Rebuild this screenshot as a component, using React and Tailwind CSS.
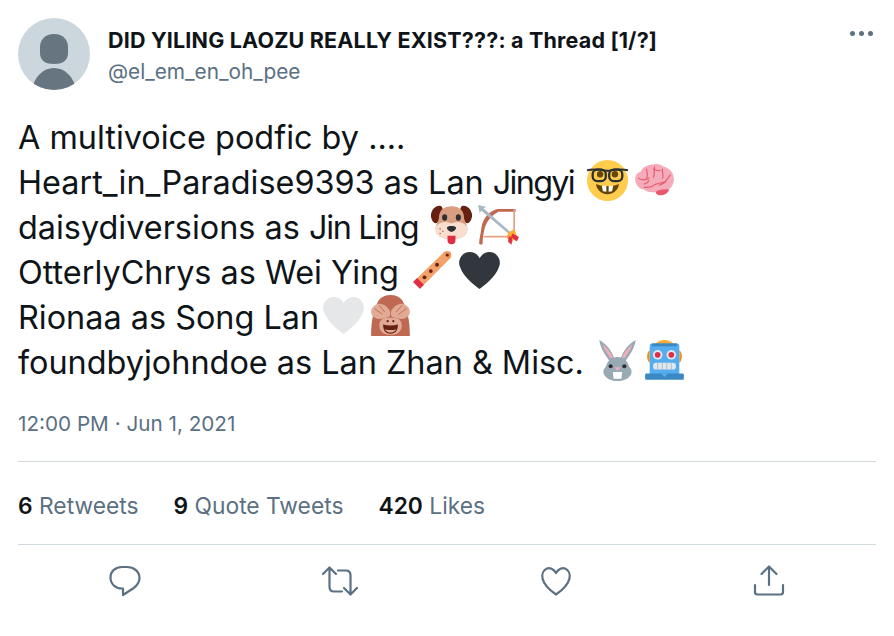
const Emoji = ({ children }) => (
  <svg viewBox="0 0 36 36" className="inline-block w-[41px] h-[41px] -my-[10px] ml-[4px] mr-[2px] align-[3px]">
    {children}
  </svg>
);

const Nerd = () => (
  <>
    <circle cx="18" cy="18" r="18" fill="#FFCC4D" />
    <path d="M8 21c2 1 5 1.800 10 1.800S26 22 28 21c0 4-4 9-10 9S8 25 8 21z" fill="#664500" />
    <path d="M13 22.500l4 .3v5l-3-.4zM19 22.800l4-.3-1 4.900-3 .4z" fill="#fff" />
    <circle cx="11.500" cy="12.500" r="2.800" fill="#664500" />
    <circle cx="24.500" cy="12.500" r="2.800" fill="#664500" />
    <path d="M0 9c3-.8 6-.6 10.500-.6 3 0 5 1 7.500 1s4.500-1 7.500-1C30 8.400 33 8.200 36 9" fill="none" stroke="#292F33" strokeWidth="1.800" />
    <rect x="5" y="8.500" width="11.500" height="10" rx="4" fill="none" stroke="#292F33" strokeWidth="2" />
    <rect x="19.500" y="8.500" width="11.500" height="10" rx="4" fill="none" stroke="#292F33" strokeWidth="2" />
  </>
);

const Brain = () => (
  <>
    <path d="M1 17c0-4 2-6 5-7 2-4 6-6 11-6 3-1 7 0 9 2 5 1 9 5 9 11 0 5-3 9-7 10-3 2-6 2-9 1-4 1-8 0-10-2-4 0-8-4-8-9z" fill="#F4ABBA" />
    <path d="M19 28c2-2 8-3 12-2-1 3-4 5-7 5s-5-1-5-3z" fill="#E8596E" />
    <path d="M4 16c3 2 6 2 9 0m-2-8c0 3 2 5 0 8m7-10c-1 3 1 6-1 9m8-7c-1 3 2 5 0 8m7-3c-2 2-3 5-5 6-4 2-8 1-11 4-2 1-5 1-7 1m19-5c-2 1-3 3-6 3m-5-14c2 1 3 2 6 1M9 21c2 0 3-1 4-3" fill="none" stroke="#EA596E" strokeWidth="1" strokeLinecap="round" />
  </>
);

const Dog = () => (
  <>
    <path d="M9 1C5-.500 1 3 0 8c-.5 4 2 8 4 8 3 0 5-6 6-9 .5-2 .5-5-1-6zM27 1c4-1.500 8 2 9 7 .5 4-2 8-4 8-3 0-5-6-6-9-.5-2-.5-5 1-6z" fill="#662113" />
    <path d="M18 1C11 1 7 5 7 11c0 3-3 6-3 10 0 6 6 9 14 9s14-3 14-9c0-4-3-7-3-10 0-6-4-10-11-10z" fill="#D99E82" />
    <path d="M4 21c0-4 5-6 9-6 2 0 3 1 5 1s3-1 5-1c4 0 9 2 9 6 0 6-6 9-14 9S4 27 4 21z" fill="#F7DECE" />
    <ellipse cx="12" cy="11" rx="2.200" ry="2.800" fill="#292F33" />
    <ellipse cx="24" cy="11" rx="2.200" ry="2.800" fill="#292F33" />
    <path d="M14 20c0-2 8-2 8 0s-2.500 3.500-4 3.500-4-1.500-4-3.500z" fill="#292F33" />
    <path d="M14.500 27h7v4a3.500 3.500 0 0 1-7 0z" fill="#DD2E44" />
    <circle cx="8" cy="21" r=".7" fill="#C1694F" /><circle cx="10.500" cy="23" r=".7" fill="#C1694F" /><circle cx="8" cy="25" r=".7" fill="#C1694F" />
  </>
);

const Bow = () => (
  <>
    <path d="M33 3.500H17C10 5 4 12 3 20c-.5 5-2 10-2 14 1 1 3 1 3 0 0-5 1-10 2-14 2-6 6-11 12-14h15z" fill="#C1694F" />
    <path d="M5 27h26V4h1.500v24.500H5z" fill="#E6A183" />
    <path d="M0 0l7 1.500-2 1.500 26 23-1.500 1.500L3 5 1.500 7z" fill="#AAB8C2" />
    <path d="M27 24l5-3 2 6-5 7-4-6z" fill="#FFAC33" />
    <path d="M30 25l6 3-2 4-5-4zM27 27l3 2-.5 6-3-2.500z" fill="#DD2E44" />
  </>
);

const Flute = () => (
  <>
    <path d="M1 28L28 2c2-1.500 5-1.500 6 .5s.5 4-1 5.500L7 34z" fill="#F4A26B" />
    <path d="M1 28l3.500-3.500 6 6L7 34z" fill="#DD2E44" />
    <path d="M28 2l6 .5-1 5.500-3-2z" fill="#EE8E4F" />
    <circle cx="31" cy="4.500" r="1.300" fill="#662113" />
    <circle cx="22" cy="13" r="1.700" fill="#662113" />
    <circle cx="16.500" cy="18.500" r="1.700" fill="#662113" />
    <circle cx="11" cy="24" r="1.700" fill="#662113" />
  </>
);

const Heart = ({ fill }) => (
  <path d="M35.900 11.200c0-5.200-4.100-9.400-9.200-9.400-3.700 0-7 2.300-8.500 5.500-1.500-3.200-4.900-5.500-8.700-5.500C4.200 1.800.1 6 .1 11.200c0 1.300.3 2.600.8 3.800C3.800 24 14 31.500 18 34.200c4-2.700 14.200-10.200 17.100-19.200.5-1.200.8-2.500.8-3.800z" fill={fill} />
);

const Monkey = () => (
  <>
    <path d="M18 0C10 0 6 5 5 12c-3 5-4 14-4 24h34c0-10-1-19-4-24-1-7-5-12-13-12z" fill="#BF6952" />
    <path d="M9 23c2-3 5-3 9-3s7 0 9 3c2 4 1 12-9 12S7 27 9 23z" fill="#E0AA94" />
    <path d="M11.500 26c4 1 9 1 13 0 0 5-2 8-6.500 8s-6.500-3-6.500-8z" fill="#662113" />
    <path d="M13 30c3 1 7 1 10 0-1 2-3 3-5 3s-4-1-5-3z" fill="#E0AA94" />
    <circle cx="15.500" cy="23" r="1" fill="#662113" /><circle cx="20.500" cy="23" r="1" fill="#662113" />
    <path d="M1 15c0-4 3-6 6-7 3-1 7 1 10 5 1 2 1 5 0 6-3 1-6 2-9 2-4 0-7-3-7-6zM35 15c0-4-3-6-6-7-3-1-7 1-10 5-1 2-1 5 0 6 3 1 6 2 9 2 4 0 7-3 7-6z" fill="#E0AA94" />
    <path d="M8 9l5 6M4 12l7 5M23 15l5-6M25 17l7-5" stroke="#BF6952" strokeWidth=".8" fill="none" />
  </>
);

const Rabbit = () => (
  <>
    <path d="M12 20C8 14 3 8 2 0c6 3 12 10 14 19zM24 20c4-6 9-12 10-20-6 3-12 10-14 19z" fill="#99AAB5" />
    <path d="M12 16C9 12 6 8 5 4c4 3 8 8 9 12zM24 16c3-4 6-8 7-12-4 3-8 8-9 12z" fill="#F4ABBA" />
    <path d="M18 15c-6 0-9 4-10 8-2 2-3 4-2 7 2 4 7 6 12 6s10-2 12-6c1-3 0-5-2-7-1-4-4-8-10-8z" fill="#99AAB5" />
    <circle cx="12" cy="23" r="1.800" fill="#292F33" /><circle cx="24" cy="23" r="1.800" fill="#292F33" />
    <path d="M15 24h6l-3 3z" fill="#F4ABBA" />
    <path d="M14 28c2.500 0 5.500 0 8 0l-.5 6h-7z" fill="#fff" />
  </>
);

const Robot = () => (
  <>
    <path d="M9 5c1-3 5-5 9-5s8 2 9 5z" fill="#FFAC33" />
    <path d="M5 9c-3 2-3 9 0 11zM31 9c3 2 3 9 0 11z" fill="#F4900C" />
    <rect x="5" y="3" width="26" height="28" rx="2" fill="#55ACEE" />
    <rect x="7" y="3" width="22" height="2.500" fill="#3B88C3" />
    <circle cx="12" cy="13" r="4.200" fill="#E1E8ED" /><circle cx="24" cy="13" r="4.200" fill="#E1E8ED" />
    <circle cx="12" cy="13" r="2.500" fill="#DD2E44" /><circle cx="24" cy="13" r="2.500" fill="#DD2E44" />
    <rect x="8" y="20" width="20" height="6" rx="2.500" fill="#E1E8ED" />
    <path d="M12 20v6M16 20v6M20 20v6M24 20v6" stroke="#99AAB5" strokeWidth=".6" />
    <rect x="1" y="29.500" width="34" height="5.500" rx="1" fill="#3B88C3" />
    <path d="M15 29.500h6l-3 3z" fill="#55ACEE" />
  </>
);

const lines = [
  ["A multivoice podfic by ...."],
  [<>Heart_in_Paradise9393 as Lan <span className="tracking-[-1.700px]">Jingyi</span> </>, <Nerd />, <Brain />],
  [<>daisydiversions as <span className="tracking-[-1.300px]">Jin Ling</span> </>, <Dog />, <Bow />],
  ["OtterlyChrys as Wei Ying ", <Flute />, <Heart fill="#31373D" />],
  ["Rionaa as Song Lan", <Heart fill="#E6E7E8" />, <Monkey />],
  ["foundbyjohndoe as Lan Zhan & Misc. ", <Rabbit />, <Robot />],
];

const Stat = ({ value, label }) => (
  <span className="text-[#5b7083]">
    <span className="font-semibold text-[#0f1419]">{value}</span> {label}
  </span>
);

export default function App() {
  return (
    <div className="w-[894px] h-[636px] bg-white px-[18px] pt-[18px] text-[#0f1419] font-['Inter',sans-serif] overflow-hidden">
      {/* Header */}
      <div className="flex items-start">
        <svg viewBox="0 0 72 72" className="w-[72px] h-[72px] shrink-0 rounded-full">
          <rect width="72" height="72" fill="#ccd6dd" />
          <path d="M36 16c9 0 14 6 14 13 0 2 0 4 0 6 0 8-6 11-14 11s-14-3-14-11c0-2 0-4 0-6 0-7 5-13 14-13z" fill="#66757f" />
          <path d="M14 72c2-13 11-22 22-22s20 9 22 22z" fill="#66757f" />
        </svg>
        <div className="ml-[18px] pt-[8px]">
          <div className="text-[21.5px] leading-[28px] font-bold tracking-[0.18px]">
            DID YILING LAOZU REALLY EXIST???: a Thread [1/?]
          </div>
          <div className="text-[20.8px] leading-[28px] mt-[4px] text-[#5b7083]">@el_em_en_oh_pee</div>
        </div>
        <div className="ml-auto mr-[3.500px] mt-[12.500px] flex gap-[4px]">
          <span className="size-[5px] rounded-full bg-[#5b7083]" />
          <span className="size-[5px] rounded-full bg-[#5b7083]" />
          <span className="size-[5px] rounded-full bg-[#5b7083]" />
        </div>
      </div>

      {/* Tweet body */}
      <div className="mt-[25px] text-[32.400px] leading-[45px] whitespace-pre">
        {lines.map(([text, a, b], i) => (
          <div key={i} className="h-[45px]">
            {text}
            {a && <Emoji>{a}</Emoji>}
            {b && <Emoji>{b}</Emoji>}
          </div>
        ))}
      </div>

      <div className="mt-[24px] text-[20.700px] leading-[30px] text-[#5b7083]">12:00 PM · Jun 1, 2021</div>

      {/* Stats */}
      <div className="mt-[22px] border-y border-[#cfd9de] h-[84px] pt-[7px] flex items-center gap-[35px] text-[22.800px]">
        <Stat value="6" label="Retweets" />
        <Stat value="9" label="Quote Tweets" />
        <Stat value="420" label="Likes" />
      </div>

      {/* Actions */}
      <div className="flex justify-around pt-[20px] text-[#5b7083]">
        <svg viewBox="0 0 32 32" className="size-[32px]" fill="none" stroke="currentColor" strokeWidth="2.200" strokeLinejoin="round" strokeLinecap="round">
          <path d="M13 2h5c7 0 12.500 4.500 12.500 11 0 5-3 8-6.500 10.500L14 30v-6.500h-1C6.500 23.500 1.500 19 1.500 12.500S6.500 2 13 2z" />
        </svg>
        <svg viewBox="0 0 36 32" className="w-[36px] h-[32px]" fill="none" stroke="currentColor" strokeWidth="2.200" strokeLinejoin="round" strokeLinecap="round">
          <path d="M1 9l6.500-6.500L14 9M7.500 3v19c0 3 2 4.500 4.500 4.500h8" />
          <path d="M35 23l-6.500 6.500L22 23M28.500 29V10c0-3-2-4.500-4.500-4.500h-8" />
        </svg>
        <svg viewBox="0 0 32 32" className="size-[32px]" fill="none" stroke="currentColor" strokeWidth="2.200" strokeLinejoin="round">
          <path d="M16 8C13.500 3.500 9.500 2.500 7 3.500 3.500 5 1.500 9 2.500 13.500 4 20 11 26 16 29.500c5-3.500 12-9.500 13.500-16C30.500 9 28.500 5 25 3.500 22.500 2.500 18.500 3.500 16 8z" />
        </svg>
        <svg viewBox="0 0 32 32" className="size-[32px]" fill="none" stroke="currentColor" strokeWidth="2.200" strokeLinejoin="round" strokeLinecap="round">
          <path d="M16 20V2M8.500 9L16 1.500 23.500 9" />
          <path d="M2 20v7c0 1.500 1 2.500 2.500 2.500h23c1.500 0 2.500-1 2.500-2.500v-7" />
        </svg>
      </div>
    </div>
  );
}
